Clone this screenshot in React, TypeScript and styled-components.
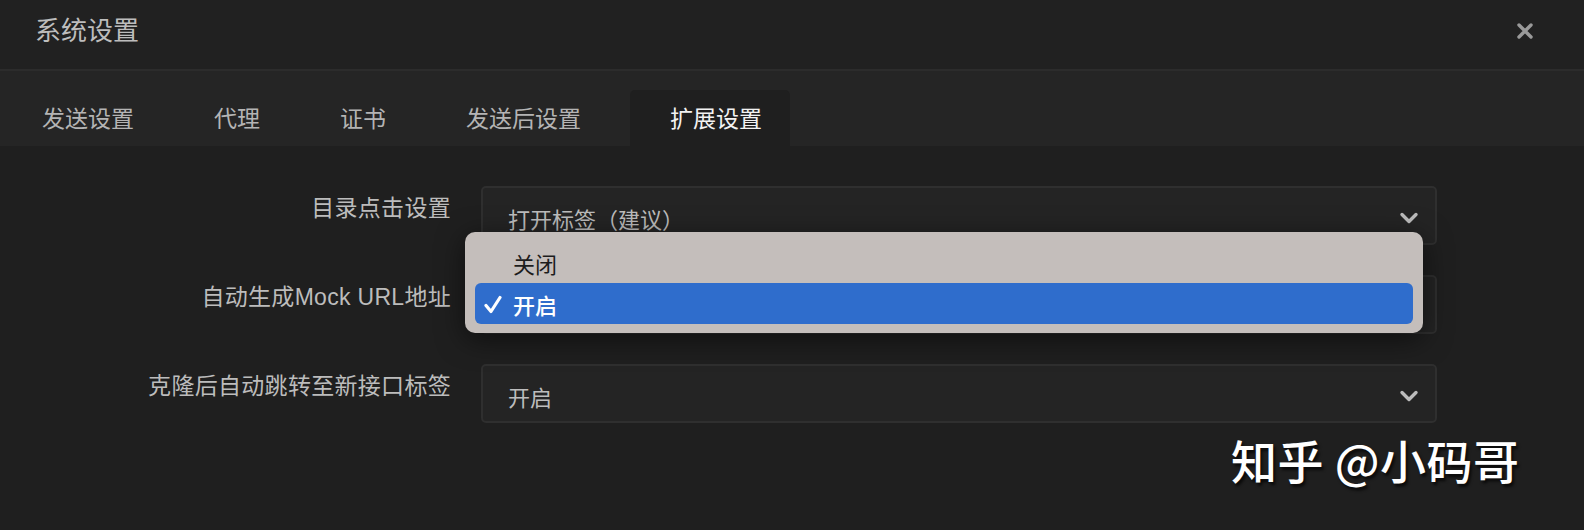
import React from "react";
import styled, { createGlobalStyle } from "styled-components";

const GlobalStyle = createGlobalStyle`
  html, body {
    margin: 0;
    padding: 0;
    background: #1f1f1f;
  }
  body {
    font-family: "Liberation Sans", "Noto Sans CJK SC", sans-serif;
  }
`;

const Window = styled.div`
  position: relative;
  width: 1584px;
  height: 530px;
  overflow: hidden;
  background: #1f1f1f;
`;

const Header = styled.div`
  height: 69px;
  display: flex;
  align-items: center;
  justify-content: space-between;
  padding: 0 50px 0 35px;
  background: #212121;
  border-bottom: 2px solid #2c2c2c;
`;

const Title = styled.div`
  font-size: 26px;
  color: #bdbdbd;
  margin-top: -12px;
`;

const CloseButton = styled.button`
  background: none;
  border: none;
  padding: 0;
  display: flex;
  color: #9a9a9a;
  margin-top: -8px;
  cursor: pointer;
`;

const TabBar = styled.div`
  height: 75px;
  display: flex;
  align-items: flex-end;
  padding-left: 2px;
  background: #252525;
`;

const Tab = styled.div<{ $active?: boolean }>`
  height: 54px;
  display: flex;
  align-items: center;
  padding: ${(p) => (p.$active ? "0 28px 2px 40px" : "0 40px 2px")};
  font-size: 23px;
  border-radius: 5px 5px 0 0;
  color: ${(p) => (p.$active ? "#f2f2f2" : "#b4b4b4")};
  background: ${(p) => (p.$active ? "#1f1f1f" : "transparent")};
  margin-left: ${(p) => (p.$active ? "9px" : "0")};
`;

const Content = styled.div`
  padding: 40px 147px 0 0;
  display: flex;
  flex-direction: column;
  gap: 30px;
`;

const Row = styled.div`
  display: flex;
  align-items: flex-start;
  gap: 30px;
`;

const Label = styled.div`
  width: 451px;
  flex-shrink: 0;
  text-align: right;
  font-size: 23px;
  line-height: 34px;
  margin-top: 5px;
  color: #bcbcbc;
  letter-spacing: 0.3px;
`;

const SelectWrap = styled.div`
  position: relative;
  flex: 1;
`;

const SelectBox = styled.div`
  height: 59px;
  box-sizing: border-box;
  display: flex;
  align-items: center;
  justify-content: space-between;
  padding: 4px 16px 0 25px;
  background: #242424;
  border: 2px solid #2f2f2f;
  border-radius: 5px;
  font-size: 22px;
  color: #bdbdbd;
`;

const Chevron = styled.svg`
  width: 20px;
  height: 14px;
  color: #bcbcbc;
`;

const Popup = styled.div`
  position: absolute;
  left: -16px;
  top: 46px;
  width: 958px;
  box-sizing: border-box;
  padding: 10px 10px 9px;
  background: #c4bebb;
  border-radius: 10px;
  box-shadow: 0 6px 28px rgba(0, 0, 0, 0.55);
  z-index: 2;
`;

const Option = styled.div<{ $selected?: boolean }>`
  position: relative;
  height: 41px;
  display: flex;
  align-items: center;
  padding-left: 38px;
  font-size: 22px;
  border-radius: 6px;
  color: ${(p) => (p.$selected ? "#ffffff" : "#1c1c1c")};
  background: ${(p) => (p.$selected ? "#2f6dcc" : "transparent")};
  font-weight: ${(p) => (p.$selected ? 500 : 400)};
`;

const Check = styled.svg`
  position: absolute;
  left: 9px;
  top: 12px;
  width: 18px;
  height: 19px;
`;

const Watermark = styled.div`
  position: absolute;
  left: 1231px;
  top: 426px;
  font-size: 46px;
  font-weight: 500;
  color: #ffffff;
  font-family: "Noto Sans CJK SC", sans-serif;
  text-shadow: 2px 3px 3px rgba(0, 0, 0, 0.7);
  letter-spacing: 0.5px;
`;

const ChevronIcon = () => (
  <Chevron viewBox="0 0 20 14">
    <path d="M3 3.5 L10 10.5 L17 3.5" fill="none" stroke="currentColor" strokeWidth="3.4" strokeLinecap="round" strokeLinejoin="round" />
  </Chevron>
);

const tabs = ["发送设置", "代理", "证书", "发送后设置", "扩展设置"];

export default function App() {
  return (
    <Window>
      <GlobalStyle />
      <Header>
        <Title>系统设置</Title>
        <CloseButton aria-label="关闭">
          <svg width="18" height="18" viewBox="0 0 18 18">
            <path d="M3 3 L15 15 M15 3 L3 15" stroke="currentColor" strokeWidth="3.4" strokeLinecap="round" />
          </svg>
        </CloseButton>
      </Header>
      <TabBar>
        {tabs.map((t, i) => (
          <Tab key={t} $active={i === tabs.length - 1}>
            {t}
          </Tab>
        ))}
      </TabBar>
      <Content>
        <Row>
          <Label>目录点击设置</Label>
          <SelectWrap>
            <SelectBox>
              <span>打开标签（建议）</span>
              <ChevronIcon />
            </SelectBox>
            <Popup>
              <Option>关闭</Option>
              <Option $selected>
                <Check viewBox="0 0 18 19">
                  <path d="M2 10.5 L7 16.5 L16 2.5" fill="none" stroke="#ffffff" strokeWidth="3.2" strokeLinecap="round" strokeLinejoin="round" />
                </Check>
                开启
              </Option>
            </Popup>
          </SelectWrap>
        </Row>
        <Row>
          <Label>自动生成Mock URL地址</Label>
          <SelectWrap>
            <SelectBox>
              <span>开启</span>
              <ChevronIcon />
            </SelectBox>
          </SelectWrap>
        </Row>
        <Row>
          <Label>克隆后自动跳转至新接口标签</Label>
          <SelectWrap>
            <SelectBox>
              <span>开启</span>
              <ChevronIcon />
            </SelectBox>
          </SelectWrap>
        </Row>
      </Content>
      <Watermark>知乎 @小码哥</Watermark>
    </Window>
  );
}
